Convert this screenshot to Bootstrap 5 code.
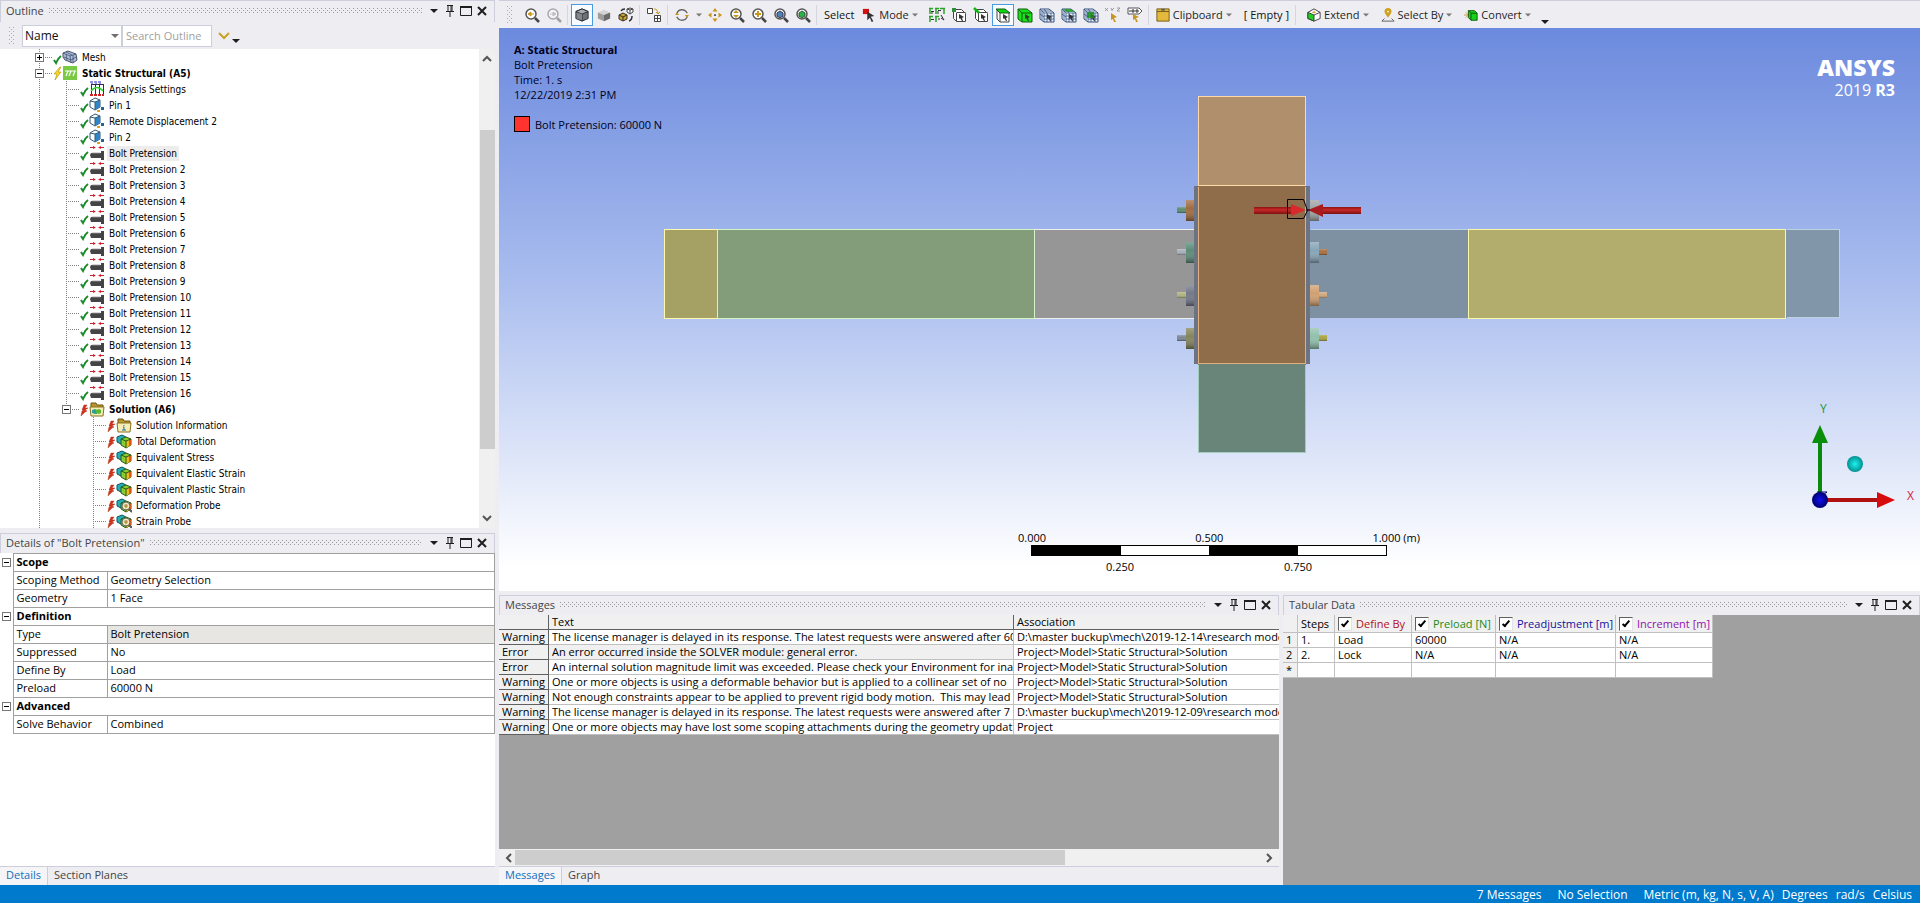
<!DOCTYPE html>
<html lang="en">
<head>
<meta charset="utf-8">
<meta name="viewport" content="width=device-width, initial-scale=1">
<title>A: Static Structural - Mechanical</title>
<link href="https://cdn.jsdelivr.net/npm/bootstrap@5.3.0/dist/css/bootstrap.min.css" rel="stylesheet">
<style>
  :root { --chrome: #eeeef2; --edge: #cccedb; --grid: #a0a0a0; }
  body { font-family: "Open Sans", "Noto Sans", sans-serif; font-size: 11px; line-height: 14px; color: #111; background: var(--chrome); overflow: hidden; }
  button, select, input { font: inherit; color: inherit; }
  svg { display: block; flex: none; }
  .workspace { display: grid; grid-template-columns: 495fr 1421fr; column-gap: 4px; min-height: 0; }
  .side { display: grid; grid-template-rows: 528fr 352fr; row-gap: 5px; min-height: 0; min-width: 0; }
  .stage { display: grid; grid-template-rows: 28px 563fr 294fr; min-height: 0; min-width: 0; }
  .lower { display: grid; grid-template-columns: 780fr 637fr; column-gap: 4px; padding-top: 4px; min-height: 0; }
  .pane { display: flex; flex-direction: column; min-width: 0; min-height: 0; border-top: 1px solid var(--edge); }
  .pane-head { display: flex; align-items: center; height: 19px; flex: none; padding: 0 4px 2px 5px; color: #444; border-left: 1px solid var(--edge); border-right: 1px solid var(--edge); }
  .pane-head.tall { height: 21px; }
  .dots { flex: 1; height: 5px; margin: 0 4px 0 5px; background: conic-gradient(at 1px 1px, transparent 75%, #999 0) 0 0 / 4px 4px, conic-gradient(at 1px 1px, transparent 75%, #999 0) 2px 2px / 4px 4px; }
  .flat { border: 0; background: none; padding: 0; display: flex; align-items: center; justify-content: center; color: #1e1e1e; }
  .pane-head .flat { width: 16px; height: 16px; }
  .grip { width: 6px; height: 18px; flex: none; background: conic-gradient(at 1px 1px, transparent 75%, #aaa 0) 0 0 / 4px 4px, conic-gradient(at 1px 1px, transparent 75%, #aaa 0) 2px 2px / 4px 4px; }

  .find-bar { height: 27px; flex: none; padding-left: 9px; font-size: 12px; }
  .find-bar select { width: 100px; height: 22px; border: 1px solid var(--edge); background: #fff; padding: 0 2px; appearance: none; border-radius: 0; }
  .find-bar input { width: 90px; height: 22px; border: 1px solid var(--edge); background: #fff; padding: 0 3px; font-size: 11px; }
  .find-bar input::placeholder { color: #a0a0a0; opacity: 1; }
  .pick { position: relative; margin-left: 7px; }
  .pick svg { position: absolute; right: 3px; top: 7px; color: #717171; pointer-events: none; }

  .tree { font-family: "DejaVu Sans Condensed", "Open Sans", sans-serif; font-size: 10px; background: #fff; flex: 1; min-width: 0; padding-left: 26px; overflow: hidden; color: #000; }
  .tree ul { list-style: none; margin: 0; padding: 0; }
  .node { display: flex; height: 16px; align-items: center; white-space: nowrap; }
  .cell { width: 27px; height: 16px; flex: none; display: flex; align-items: center; --v: repeating-linear-gradient(#808080 0 1px, transparent 1px 2px); --h: repeating-linear-gradient(90deg, #808080 0 1px, transparent 1px 2px); background-repeat: no-repeat; }
  .cell.line { background-image: var(--v); background-size: 1px 16px; background-position: 13px 0; }
  .cell.tee { background-image: var(--v), var(--h); background-size: 1px 16px, 14px 1px; background-position: 13px 0, 13px 8px; }
  .cell.end { background-image: var(--v), var(--h); background-size: 1px 8px, 14px 1px; background-position: 13px 0, 13px 8px; }
  .toggle { width: 9px; height: 9px; padding: 0; margin-left: 9px; border: 1px solid #777; background: #fff; position: relative; display: block; flex: none; }
  .toggle::before, .toggle.plus::after { content: ""; position: absolute; left: 1px; top: 3px; width: 5px; height: 1px; background: #000; }
  .toggle.plus::after { transform: rotate(90deg); }
  .node .cap { padding: 0 2px; margin-left: 2px; line-height: 15px; color: #000; text-decoration: none; }
  .node .cap.on { background: #ededed; }

  .vbar { width: 16px; flex: none; background: #f0f0f0; display: flex; flex-direction: column; align-items: center; }
  .vbar .thumb { width: 15px; flex: 319; background: #cdcdcd; }
  .vbar .run-a { flex: 61; } .vbar .run-b { flex: 59; }
  .hbar { height: 17px; flex: none; background: #f0f0f0; display: flex; align-items: center; }
  .hbar .thumb { flex: 549; height: 15px; background: #cdcdcd; }
  .hbar .run { flex: 197; }

  .sheet { background: #fff; flex: 1; min-height: 0; overflow: hidden; }
  .props { width: 100%; table-layout: fixed; border-collapse: collapse; color: #000; }
  .props td, .props th { height: 18px; padding: 0 0 2px 3px; border: 1px solid #a0a0a0; font-weight: 400; line-height: 14px; white-space: nowrap; overflow: hidden; text-align: left; }
  .props .gut { border: 0; border-right: 1px solid #a0a0a0; padding: 0; }
  .props .gut .toggle { margin-left: 2px; }
  .props th.cat { font-weight: 700; }
  .props .locked { background: #e7e6e3; }

  .tabs { height: 19px; flex: none; display: flex; border-top: 1px solid var(--edge); }
  .tabs a { padding: 0 6px; color: #444; text-decoration: none; border-right: 1px solid transparent; line-height: 15px; }
  .tabs a.on { color: #0e70c0; background: #f5f5f7; border-right-color: var(--edge); }

  .ribbon { border-top: 1px solid var(--edge); padding-left: 8px; }
  .ribbon .flat { height: 22px; }
  .ico { width: 22px; flex: none; border: 1px solid transparent !important; }
  .ico.on { border-color: #4b9be0 !important; background: #f8fbff !important; }
  .rule { width: 1px; height: 20px; margin: 0 3px 0 2px; background: #d5d6e0; flex: none; }
  .menu-btn { gap: 3px; white-space: nowrap; }
  .menu-btn .car, .car { color: #777; }
  .rot-car { margin: 0 2px 0 3px; }
  .more { padding-left: 6px !important; }

  .view { position: relative; background: linear-gradient(#6c8ade, #a9bdee 45%, #fff 96%); overflow: hidden; min-height: 0; }
  .view > .model { width: 100%; height: 100%; }
  .caption { position: absolute; left: 15px; top: 14px; line-height: 15px; color: #000020; }
  .legend-row { display: flex; align-items: center; gap: 5px; margin-top: 14px; }
  .swatch { width: 16px; height: 16px; background: #ff342e; border: 1px solid #000; }
  .brand { position: absolute; right: 25px; top: 23px; color: #fff; text-align: right; }
  .brand .name { font-weight: 800; font-size: 23px; line-height: 32px; }
  .brand .rel { font-size: 16px; line-height: 18px; margin-top: -2px; }
  .triad { position: absolute; right: 0; bottom: 72px; }
  .ruler { position: absolute; right: 500px; bottom: 17px; width: 402px; color: #000; }
  .ruler .bars { height: 11px; border: 1px solid #000; margin: 0 33px 0 13px; display: grid; grid-template-columns: repeat(4, 1fr); }
  .ruler .bars i:nth-child(odd) { background: #000; }
  .ruler .bars i:nth-child(even) { background: #fff; }
  .ruler .under { margin: 4px 33px 0 13px; }

  .msgs { width: 100%; table-layout: fixed; border-collapse: separate; border-spacing: 0; background: #fff; color: #000; }
  .msgs td, .msgs th { height: 15px; padding: 0 0 0 3px; font-weight: 400; border-right: 1px solid #c0c0c0; border-bottom: 1px solid #c0c0c0; overflow: hidden; white-space: pre; line-height: 14px; text-align: left; }
  .msgs th, .steps th { background: #f0f0f0; border-right-color: #606060; border-bottom-color: #606060; }
  .msgs div { height: 14px; overflow: hidden; }
  .msgs tr > :last-child { border-right: 0; }
  .msgs .alt td { background: #f0f0f0; }
  .steps { border-collapse: separate; border-spacing: 0; background: #fff; table-layout: fixed; width: 430px; color: #000; }
  .steps td, .steps th { height: 15px; padding: 0 0 0 3px; font-weight: 400; border-right: 1px solid #c0c0c0; border-bottom: 1px solid #c0c0c0; line-height: 14px; white-space: nowrap; overflow: hidden; text-align: left; }
  .steps thead th { height: 18px; }
  .steps label { display: flex; align-items: center; gap: 4px; }
  .steps input { appearance: none; width: 14px; height: 14px; margin: 0; flex: none; border: 1px solid; border-color: #606060 #e3e3e3 #e3e3e3 #606060; background: #fff; position: relative; }
  .steps input:checked::before { content: ""; position: absolute; left: 4px; top: 1px; width: 4px; height: 8px; border: solid #000; border-width: 0 2px 2px 0; transform: rotate(40deg); }
  .void { background: var(--grid); flex: 1; min-height: 0; overflow: hidden; }

  .status { height: 18px; flex: none; background: #007acc; color: #fff; white-space: nowrap; padding: 2px 8px 0 0; font-size: 12px; line-height: 16px; }
</style>
</head>
<body class="vh-100 d-flex flex-column">

<svg width="0" height="0" class="position-absolute" aria-hidden="true">
  <defs>
    <linearGradient id="g-cyl" x2="0" y2="1"><stop stop-color="#fff" stop-opacity=".25"/><stop offset=".4" stop-color="#fff" stop-opacity="0"/><stop offset="1" stop-color="#000" stop-opacity=".4"/></linearGradient>
    <linearGradient id="g-red" x2="0" y2="1"><stop stop-color="#8c1414"/><stop offset=".4" stop-color="#c82828"/><stop offset="1" stop-color="#7c1010"/></linearGradient>
    <radialGradient id="g-blue"><stop stop-color="#1010f0"/><stop offset="1" stop-color="#000070"/></radialGradient>
    <radialGradient id="g-cyan"><stop stop-color="#20f0f0"/><stop offset="1" stop-color="#009090"/></radialGradient>
  </defs>
  <symbol id="caret" viewBox="0 0 8 8"><path d="M0 2h8L4 6z" fill="currentColor"/></symbol>
  <symbol id="pin" viewBox="0 0 12 12"><path d="M3 .5h6M4 .5v6M8 0v6.500M7 1v5M2 6.500h8M6 7v5" stroke="currentColor" fill="none"/></symbol>
  <symbol id="max" viewBox="0 0 12 12"><path d="M.5 1.500h11v9H.5z" stroke="currentColor" fill="none"/><path d="M0 2h12" stroke="currentColor" stroke-width="2"/></symbol>
  <symbol id="close" viewBox="0 0 12 12"><path d="M2 2l8 8M10 2l-8 8" stroke="currentColor" stroke-width="2"/></symbol>
  <symbol id="chev" viewBox="0 0 12 12"><path d="M2 8l4-4 4 4" stroke="currentColor" stroke-width="2" fill="none"/></symbol>

  <symbol id="check" viewBox="0 0 9 16"><path d="M1 11l2 3q2-5 5-7" fill="none" stroke="#1b8a2b" stroke-width="2"/></symbol>
  <symbol id="bolt-y" viewBox="0 0 9 16"><path d="M7 2L1 9h3l-2 6 6-8H5l3-5z" fill="#ffd91f" stroke="#b09000" stroke-width=".6"/></symbol>
  <symbol id="bolt-r" viewBox="0 0 9 16"><path d="M7 4L4 4 2 9h2l-2 1-1 5 4-4 2-1-2-1 3-2H5z" fill="#d3321c" stroke="#a32010" stroke-width=".4"/></symbol>
  <symbol id="t-mesh" viewBox="0 0 16 16"><path d="M1 4l5-2 8 3 1 6-4 3-8-3-2-3z" fill="#aebfdd" stroke="#44516d"/><path d="M1 4l7 3 6-2M8 7l1 7M4 5l1 6M11 6v7M2 8l7 3 5-3M4 3l6 3" stroke="#44516d" fill="none" stroke-width=".8"/></symbol>
  <symbol id="t-static" viewBox="0 0 16 16"><path d="M1 1h14v14H1z" fill="#7ac943"/><path d="M3 6h11M4 11l2-5M7 11l2-5M11 11l2-5" stroke="#fff" stroke-width="1.200" fill="none"/></symbol>
  <symbol id="t-set" viewBox="0 0 16 16"><path d="M2.500 3v11M6.500 3v11M10.500 3v11M14.500 3v11M2 3.500h12" stroke="#333"/><path d="M2 10q6-7 12 0" stroke="#29d629" fill="none" stroke-width="1.500"/><path d="M1 1h3M5 1h3M9 1h3M3 2v2M7 2v2M11 2v2" stroke="#22c"/><path d="M1 14h3M5 14h3M9 14h3M13 14h2" stroke="#c22" stroke-width="2"/></symbol>
  <symbol id="t-pin" viewBox="0 0 16 16"><path d="M1 4l5-3 5 2v7l-5 3-5-3z" fill="#fff" stroke="#335a78"/><path d="M6 5l5-2v7l-5 3z" fill="#2f86c6"/><path d="M1 4l5 1v8M6 5l5-2" stroke="#335a78" fill="none"/><path d="M12 10h3v3h-3z" fill="#2b5f97"/><path d="M8 13h3v2H8z" fill="#d9a421"/></symbol>
  <symbol id="t-bolt" viewBox="0 0 16 16"><path d="M1 2.500h5M10 2.500h5" stroke="#d02030"/><path d="M4 1l3 1.500L4 4zM12 1L9 2.500 12 4z" fill="#d02030"/><path d="M1 10l1-2h10V6h3v9h-3v-2H2z" fill="#444"/><path d="M4 7v2M6 7v2M8 7v2M10 7v2" stroke="#999" stroke-width=".8"/></symbol>
  <symbol id="t-fold" viewBox="0 0 16 16"><path d="M2 2h5l1 2h6v4H2z" fill="#b8962c" stroke="#6d5510"/><path d="M1 6h14l-1 9H2z" fill="#f6edb2" stroke="#8a7020"/></symbol>
  <symbol id="t-sol" viewBox="0 0 16 16"><use href="#t-fold"/><path d="M3 9l3-1 2 1v4l-2 0-3-1z" fill="#2aa198"/><path d="M7 9l3-1 2 1v3l-2 1-3-1z" fill="#5cb82e"/></symbol>
  <symbol id="t-info" viewBox="0 0 16 16"><use href="#t-fold"/><path d="M8 8v1M7 10h1v3M6 13h4" stroke="#1d6db5" fill="none"/></symbol>
  <symbol id="t-res" viewBox="0 0 16 16"><path d="M1 4l5-2 4 2v6l-5 1-4-2z" fill="#1fb0b8" stroke="#14545e"/><path d="M5 6l5-2 5 2v6l-5 3-5-3z" fill="#86cf2e" stroke="#2a5a1a"/><path d="M10 8l5-2v6l-5 3z" fill="#f0b81c"/><path d="M13 7l2-1v6l-2 1z" fill="#e2561a"/><path d="M5 6l5 2v7M10 8l5-2" stroke="#2a5a1a" fill="none"/></symbol>
  <symbol id="t-probe" viewBox="0 0 16 16"><use href="#t-res"/><circle cx="10" cy="9" r="4" fill="#f5efd2" fill-opacity=".85" stroke="#666"/><path d="M13 12l3 3" stroke="#555" stroke-width="2"/><path d="M8 9h4M10 7v4" stroke="#b07a20"/></symbol>

  <symbol id="lens" viewBox="0 0 16 16"><circle cx="7" cy="7" r="5" fill="#fff" stroke="#555" stroke-width="1.500"/><path d="M11 11l4 4" stroke="#444" stroke-width="2.500"/></symbol>
  <symbol id="i-prev" viewBox="0 0 16 16"><use href="#lens"/><path d="M4 7l3-2v4zM6 7h4" fill="#c8961e" stroke="#c8961e"/></symbol>
  <symbol id="i-next" viewBox="0 0 16 16"><g opacity=".45"><use href="#lens"/><path d="M10 7L7 5v4zM4 7h4" fill="#888" stroke="#888"/></g></symbol>
  <symbol id="i-solid" viewBox="0 0 16 16"><path d="M1 4l7-3 7 3v8l-7 3-7-3z" fill="#6d7278" stroke="#222"/><path d="M1 4l7-3 7 3-7 3z" fill="#a8adb3" stroke="#222"/><path d="M8 7v8" stroke="#222"/><path d="M2 5l6 2v7l-6-2z" fill="#82878d"/></symbol>
  <symbol id="i-shade" viewBox="0 0 16 16"><path d="M1 5l7-3 7 3-7 3z" fill="#d4d4d4"/><path d="M1 5l7 3v7l-7-3z" fill="#9d9d9d"/><path d="M15 5L8 8v7l7-3z" fill="#6b6b6b"/></symbol>
  <symbol id="i-rand" viewBox="0 0 16 16"><path d="M9 2l3-1 3 1v3l-3 2-3-2z" fill="#fff" stroke="#444"/><path d="M9 2l3 1 3-1M12 3v4" fill="none" stroke="#444"/><path d="M1 8l4-2 4 2v4l-4 2-4-2z" fill="#c9a227" stroke="#333"/><path d="M1 8l4 2 4-2M5 10v4" stroke="#333" fill="none"/><path d="M3 4q1-2 4-2M14 9q0 4-3 5" fill="none" stroke="#333" stroke-width="1.500"/></symbol>
  <symbol id="i-wire" viewBox="0 0 16 16"><path d="M1.500 1.500h5v5h-5zM8.500 8.500h6v6h-6zM11.500 9v5M9 11.500h5" fill="#fff" stroke="#444"/><path d="M8 2q4 0 4 5M10 5l2 2 2-2" fill="none" stroke="#c8961e"/></symbol>
  <symbol id="i-rot" viewBox="0 0 16 16"><path d="M2 7q1-5 6-5 4 0 6 4M14 9q-1 5-6 5-4 0-6-4" fill="none" stroke="#666" stroke-width="1.500"/><path d="M0 8l2-3 3 3zM16 8l-2 3-3-3z" fill="#c8961e"/></symbol>
  <symbol id="i-pan" viewBox="0 0 16 16"><path d="M8 0l3 4H5zM8 16l3-4H5zM0 8l4-3v6zM16 8l-4-3v6z" fill="#c8961e"/><path d="M7 7h2v2H7z" fill="#444"/></symbol>
  <symbol id="i-zoom" viewBox="0 0 16 16"><use href="#lens"/><path d="M4 6l3-3 3 3zM4 8l3 3 3-3z" fill="#c8961e"/></symbol>
  <symbol id="i-box" viewBox="0 0 16 16"><use href="#lens"/><path d="M7 4v6M4 7h6" stroke="#c8961e" stroke-width="2"/></symbol>
  <symbol id="i-fit" viewBox="0 0 16 16"><use href="#lens"/><path d="M4 6l3-2 3 2v3l-3 2-3-2z" fill="#4d84b8" stroke="#335"/></symbol>
  <symbol id="i-sel" viewBox="0 0 16 16"><use href="#lens"/><path d="M4 6l3-2 3 2v3l-3 2-3-2z" fill="#28b446" stroke="#353"/></symbol>
  <symbol id="i-mode" viewBox="0 0 16 16"><path d="M1 1h7v6H1z" fill="#d01010"/><path d="M6 4l8 5-4 1 3 5-2 1-2-5-3 3z" fill="#333"/></symbol>
  <symbol id="cur" viewBox="0 0 16 16"><path d="M8 7l5 3-2 1 1 3h-1l-2-3-1 1z" fill="#333"/></symbol>
  <symbol id="i-grp" viewBox="0 0 16 16"><path d="M0 1.500h4M1 1v6M6 1.500h4M7 1v6M11 1.500h5M15 1v6M0 9.500h4M1 9v6M6 9.500h4M7 9v6" stroke="#28a428" stroke-width="1.500"/><path d="M2 4.500h3M3 4v3M9 3.500h3M9 4v3M2 12.500h3M9 12h2M12 8l3 5-3-2" stroke="#333" fill="none"/></symbol>
  <symbol id="i-vert" viewBox="0 0 16 16"><path d="M2.500 2.500h8l4 4v8h-9l-3-3zM5.500 6v8M5.500 5.500h9" fill="#fff" stroke="#444"/><path d="M1 1h4v4H1z" fill="#2f8f3c"/><use href="#cur"/></symbol>
  <symbol id="i-edge" viewBox="0 0 16 16"><path d="M2.500 2.500h8l4 4v8h-9l-3-3zM5.500 6v8M5.500 5.500h9" fill="#fff" stroke="#444"/><path d="M1 1l5 5" stroke="#12b512" stroke-width="2.500"/><use href="#cur"/></symbol>
  <symbol id="i-face" viewBox="0 0 16 16"><path d="M2 3h8l4 3v9H5l-3-3zM5 6v9" fill="#fff" stroke="#444"/><path d="M1 2h9l5 4H5z" fill="#12d512" stroke="#175c17"/><use href="#cur"/></symbol>
  <symbol id="i-body" viewBox="0 0 16 16"><path d="M1 2h9l5 4v9H5l-4-3z" fill="#19e119" stroke="#0e5c0e"/><path d="M1 2l4 4h10M5 6v9" fill="none" stroke="#0e5c0e"/><use href="#cur"/></symbol>
  <symbol id="i-grid" viewBox="0 0 16 16"><path d="M1 2h9l5 4v9H5l-4-3z" fill="#eaf2ff" stroke="#35507c"/><path d="M1 2l4 4h10M5 6v9M8 6v9M12 6v9M5 9h10M5 12h10M3 4h9M1 7l4 3M5 2l3 4M3 4v9" fill="none" stroke="#35507c" stroke-width=".8"/><use href="#cur"/></symbol>
  <symbol id="i-gridf" viewBox="0 0 16 16"><use href="#i-grid"/><path d="M2 2h8l4 3H5z" fill="#1ba01b" fill-opacity=".8"/></symbol>
  <symbol id="i-gridb" viewBox="0 0 16 16"><use href="#i-grid"/><path d="M4 5h7v6H4z" fill="#1b901b" fill-opacity=".85"/></symbol>
  <symbol id="i-xyz" viewBox="0 0 16 16"><path d="M0 1l3 3M3 1L0 4M6 1l1 2 2-2M7 3v1M12 1h3l-3 3h3" stroke="#888" stroke-width=".8" fill="none"/><path d="M6 6l6 4-3 1 2 4-2 0-1-3-2 1z" fill="#c8961e"/></symbol>
  <symbol id="i-tag" viewBox="0 0 16 16"><path d="M1 1h11l3 3-3 3H1z" fill="#fff" stroke="#555"/><path d="M3 3v2M5 3h2v2H5zM9 3h2v2H9z" stroke="#333" fill="none"/><path d="M6 7l6 3-3 1 2 4-2 0-1-3-2 1z" fill="#c8961e"/></symbol>
  <symbol id="i-clip" viewBox="0 0 16 16"><path d="M1 1h14v14H1z" fill="#e3b83c" stroke="#6a5314"/><path d="M1 4h14" stroke="#6a5314"/><path d="M6 1h4v2H6z" fill="#555"/></symbol>
  <symbol id="i-ext" viewBox="0 0 16 16"><path d="M1 5l7-4 7 4v7l-7 3-7-3z" fill="#fff" stroke="#333"/><path d="M1 5l7 3v7l-7-3z" fill="#22d022" stroke="#333"/><path d="M8 8l7-3" stroke="#333"/><path d="M8 3v3M6 5h4" stroke="#c8961e"/></symbol>
  <symbol id="i-loc" viewBox="0 0 16 16"><path d="M8 11Q4 6 4 4a4 4 0 018 0q0 2-4 7z" fill="#d0a021"/><circle cx="8" cy="4" r="1" fill="#fff"/><path d="M4 12l-3 3h14l-3-3" fill="none" stroke="#555"/></symbol>
  <symbol id="i-conv" viewBox="0 0 16 16"><path d="M0 8h4M2 5l3 3-3 3" stroke="#c8961e" fill="none"/><path d="M5 3h7l3 3v8H8l-3-3z" fill="#17d217" stroke="#0e4c0e"/><path d="M5 3l3 3h7M8 6v8" fill="none" stroke="#0e4c0e"/></symbol>
</svg>

<main class="workspace flex-grow-1">
  <div class="side">
    <section class="pane" aria-label="Outline">
      <header class="pane-head tall"><span>Outline</span><span class="dots"></span><button class="flat" aria-label="Menu"><svg width="8" height="8"><use href="#caret"/></svg></button><button class="flat" aria-label="Pin"><svg width="12" height="12"><use href="#pin"/></svg></button><button class="flat" aria-label="Maximize"><svg width="12" height="12"><use href="#max"/></svg></button><button class="flat" aria-label="Close"><svg width="12" height="12"><use href="#close"/></svg></button></header>
      <div class="find-bar d-flex align-items-center">
        <span class="grip"></span>
        <span class="pick"><select aria-label="Filter by"><option>Name</option></select><svg width="8" height="8"><use href="#caret"/></svg></span>
        <input type="text" placeholder="Search Outline" aria-label="Search Outline">
        <button class="flat ms-1" aria-label="Expand"><svg width="16" height="12" viewBox="0 0 16 12"><path d="M3 3l5 5 5-5" fill="none" stroke="#c9a227" stroke-width="2"/></svg></button>
        <button class="flat align-self-end mb-1" aria-label="More"><svg width="8" height="8"><use href="#caret"/></svg></button>
      </div>
      <div class="d-flex flex-grow-1 overflow-hidden">
        <div class="tree"><ul id="tree"></ul></div>
        <div class="vbar"><svg class="my-1" width="12" height="12" color="#555"><use href="#chev"/></svg><span class="run-a"></span><span class="thumb"></span><span class="run-b"></span><svg class="my-1" width="12" height="12" color="#555"><use href="#chev" transform="rotate(180 6 6)"/></svg></div>
      </div>
    </section>

    <section class="pane" aria-label="Details">
      <header class="pane-head"><span>Details of "Bolt Pretension"</span><span class="dots"></span><button class="flat" aria-label="Menu"><svg width="8" height="8"><use href="#caret"/></svg></button><button class="flat" aria-label="Pin"><svg width="12" height="12"><use href="#pin"/></svg></button><button class="flat" aria-label="Maximize"><svg width="12" height="12"><use href="#max"/></svg></button><button class="flat" aria-label="Close"><svg width="12" height="12"><use href="#close"/></svg></button></header>
      <div class="sheet">
        <table class="props">
          <colgroup><col style="width:13px"><col style="width:94px"><col></colgroup>
          <tr><td class="gut"><button class="toggle" aria-label="Collapse"></button></td><th class="cat" colspan="2">Scope</th></tr>
          <tr><td class="gut"></td><th>Scoping Method</th><td>Geometry Selection</td></tr>
          <tr><td class="gut"></td><th>Geometry</th><td>1 Face</td></tr>
          <tr><td class="gut"><button class="toggle" aria-label="Collapse"></button></td><th class="cat" colspan="2">Definition</th></tr>
          <tr><td class="gut"></td><th>Type</th><td class="locked">Bolt Pretension</td></tr>
          <tr><td class="gut"></td><th>Suppressed</th><td>No</td></tr>
          <tr><td class="gut"></td><th>Define By</th><td>Load</td></tr>
          <tr><td class="gut"></td><th>Preload</th><td>60000 N</td></tr>
          <tr><td class="gut"><button class="toggle" aria-label="Collapse"></button></td><th class="cat" colspan="2">Advanced</th></tr>
          <tr><td class="gut"></td><th>Solve Behavior</th><td>Combined</td></tr>
        </table>
      </div>
      <nav class="tabs"><a class="on" href="#">Details</a><a href="#">Section Planes</a></nav>
    </section>
  </div>

  <div class="stage">
    <div class="ribbon d-flex align-items-center" role="toolbar">
      <span class="grip me-1"></span>
      <button class="flat ico ms-1" aria-label="Previous view"><svg width="16" height="16"><use href="#i-prev"/></svg></button>
      <button class="flat ico" aria-label="Next view"><svg width="16" height="16"><use href="#i-next"/></svg></button>
      <span class="rule"></span>
      <button class="flat ico on" aria-label="Shaded with edges"><svg width="14" height="14"><use href="#i-solid"/></svg></button>
      <button class="flat ico" aria-label="Shaded"><svg width="14" height="14"><use href="#i-shade"/></svg></button>
      <button class="flat ico" aria-label="Random colors"><svg width="16" height="16"><use href="#i-rand"/></svg></button>
      <span class="rule"></span>
      <button class="flat ico" aria-label="Preferences"><svg width="16" height="16"><use href="#i-wire"/></svg></button>
      <span class="rule"></span>
      <button class="flat ico" aria-label="Rotate"><svg width="14" height="14"><use href="#i-rot"/></svg></button>
      <button class="flat car rot-car" aria-label="Rotate options"><svg width="6" height="6"><use href="#caret"/></svg></button>
      <button class="flat ico" aria-label="Pan"><svg width="14" height="14"><use href="#i-pan"/></svg></button>
      <button class="flat ico" aria-label="Zoom"><svg width="16" height="16"><use href="#i-zoom"/></svg></button>
      <button class="flat ico" aria-label="Box zoom"><svg width="16" height="16"><use href="#i-box"/></svg></button>
      <button class="flat ico" aria-label="Zoom to fit"><svg width="16" height="16"><use href="#i-fit"/></svg></button>
      <button class="flat ico" aria-label="Zoom to selection"><svg width="16" height="16"><use href="#i-sel"/></svg></button>
      <span class="rule"></span>
      <span class="mx-1">Select</span>
      <button class="flat menu-btn mx-1"><svg width="14" height="14"><use href="#i-mode"/></svg>Mode<svg class="car" width="6" height="6"><use href="#caret"/></svg></button>
      <button class="flat ico ms-1" aria-label="Filter"><svg width="16" height="16"><use href="#i-grp"/></svg></button>
      <button class="flat ico" aria-label="Vertex"><svg width="16" height="16"><use href="#i-vert"/></svg></button>
      <button class="flat ico" aria-label="Edge"><svg width="16" height="16"><use href="#i-edge"/></svg></button>
      <button class="flat ico on" aria-label="Face"><svg width="16" height="16"><use href="#i-face"/></svg></button>
      <button class="flat ico" aria-label="Body"><svg width="16" height="16"><use href="#i-body"/></svg></button>
      <button class="flat ico" aria-label="Node"><svg width="16" height="16"><use href="#i-grid"/></svg></button>
      <button class="flat ico" aria-label="Element face"><svg width="16" height="16"><use href="#i-gridf"/></svg></button>
      <button class="flat ico" aria-label="Element"><svg width="16" height="16"><use href="#i-gridb"/></svg></button>
      <button class="flat ico" aria-label="Coordinates"><svg width="16" height="16"><use href="#i-xyz"/></svg></button>
      <button class="flat ico" aria-label="Label"><svg width="16" height="16"><use href="#i-tag"/></svg></button>
      <span class="rule"></span>
      <button class="flat menu-btn mx-1"><svg width="14" height="14"><use href="#i-clip"/></svg>Clipboard<svg class="car" width="6" height="6"><use href="#caret"/></svg></button>
      <span class="text-nowrap ms-2 me-1">[ Empty ]</span>
      <span class="rule"></span>
      <button class="flat menu-btn ms-2 me-1"><svg width="14" height="14"><use href="#i-ext"/></svg>Extend<svg class="car" width="6" height="6"><use href="#caret"/></svg></button>
      <button class="flat menu-btn mx-2"><svg width="14" height="14"><use href="#i-loc"/></svg>Select By<svg class="car" width="6" height="6"><use href="#caret"/></svg></button>
      <button class="flat menu-btn mx-1"><svg width="14" height="14"><use href="#i-conv"/></svg>Convert<svg class="car" width="6" height="6"><use href="#caret"/></svg></button>
      <button class="flat align-items-end more" aria-label="More"><svg width="8" height="8"><use href="#caret"/></svg></button>
    </div>

    <div class="view">
      <svg class="model" viewBox="499 28 1421 563" role="img" aria-label="Bolted joint model">
        <g shape-rendering="crispEdges">
          <path d="M665 230h52v88h-52z" fill="#a5a064"/>
          <path d="M717 230h317v88H717z" fill="#839d7a"/>
          <path d="M1034 230h161v88h-161z" fill="#969696"/>
          <path d="M1309 230h159v88h-159z" fill="#7e91a3"/>
          <path d="M1468 230h318v88h-318z" fill="#b3ad6d"/>
          <path d="M1786 230h53v88h-53z" fill="#8296aa"/>
          <g fill="none" transform="translate(.5 .5)">
            <path d="M664 229h53v89h-53z" stroke="#fdf8b0"/>
            <path d="M717 229h317v89H717z" stroke="#d4f4c4"/>
            <path d="M1194 229h-160M1194 318h-160" stroke="#eee"/>
            <path d="M1310 229h158M1786 229h53v88h-53" stroke="#bdd0e4"/>
            <path d="M1468 229h317v89h-317z" stroke="#fbf7a8"/>
          </g>
          <path d="M1198 96h108v90h-108z" fill="#b08f6c"/>
          <path d="M1198 364h108v88h-108z" fill="#698479"/>
          <path d="M1194 186h116v178h-116z" fill="#6c7484"/>
          <path d="M1198 186h108v178h-108z" fill="#8f6c4a"/>
          <g fill="none" transform="translate(.5 .5)">
            <path d="M1198 364v88h107v-88" stroke="#a4ccba"/>
            <path d="M1198 96h107v89h-107z" stroke="#ffd9a8"/>
            <path d="M1198 186v177h107V186" stroke="#e0b080"/>
          </g>
          <g id="bolts"></g>
        </g>
        <path d="M1254 207h37v7h-37zM1322 207h39v7h-39z" fill="url(#g-red)"/>
        <path d="M1291 204l15 6-15 6z" fill="#d82a2a"/><path d="M1323 204l-15 6 15 7z" fill="#a81c20"/>
        <path d="M1287.500 199.500h16l4 11-4 8h-16zM1306 210h4" fill="none" stroke="#000"/>
      </svg>
      <div class="caption"><b>A: Static Structural</b><br>Bolt Pretension<br>Time: 1. s<br>12/22/2019 2:31 PM
        <div class="legend-row"><span class="swatch"></span>Bolt Pretension: 60000 N</div>
      </div>
      <div class="brand"><div class="name">ANSYS</div><div class="rel">2019 <b>R3</b></div></div>
      <div class="ruler">
        <div class="d-flex justify-content-between"><span>0.000</span><span>0.500</span><span>1.000 (m)</span></div>
        <div class="bars"><i></i><i></i><i></i><i></i></div>
        <div class="under d-flex justify-content-around"><span>0.250</span><span>0.750</span></div>
      </div>
      <svg class="triad" width="120" height="120" viewBox="1800 399 120 120" font-size="12">
        <path d="M1818 440h4v56h-4z" fill="#0a8a0a"/><path d="M1820 425l8 18h-16z" fill="#0a8f0a"/>
        <path d="M1822 498h56v4h-56z" fill="#b01010"/><path d="M1877 492l18 8-18 8z" fill="#d80c0c"/>
        <circle cx="1820" cy="500" r="8" fill="url(#g-blue)"/><path d="M1817 492h10l-4 3" fill="none" stroke="#000080"/>
        <circle cx="1855" cy="464" r="8" fill="url(#g-cyan)"/>
        <text x="1820" y="413" fill="#1a9a3a">Y</text><text x="1907" y="500" fill="#d82040">X</text>
      </svg>
    </div>

    <div class="lower">
      <section class="pane" aria-label="Messages">
        <header class="pane-head"><span>Messages</span><span class="dots"></span><button class="flat" aria-label="Menu"><svg width="8" height="8"><use href="#caret"/></svg></button><button class="flat" aria-label="Pin"><svg width="12" height="12"><use href="#pin"/></svg></button><button class="flat" aria-label="Maximize"><svg width="12" height="12"><use href="#max"/></svg></button><button class="flat" aria-label="Close"><svg width="12" height="12"><use href="#close"/></svg></button></header>
        <div class="void">
          <table class="msgs">
            <colgroup><col style="width:50px"><col><col style="width:265px"></colgroup>
            <thead><tr><th></th><th>Text</th><th>Association</th></tr></thead>
            <tbody id="msgs"></tbody>
          </table>
        </div>
        <div class="hbar"><svg class="ms-1" width="12" height="12" color="#555"><use href="#chev" transform="rotate(-90 6 6)"/></svg><span class="thumb"></span><span class="run"></span><svg class="me-1" width="12" height="12" color="#555"><use href="#chev" transform="rotate(90 6 6)"/></svg></div>
        <nav class="tabs"><a class="on" href="#">Messages</a><a href="#">Graph</a></nav>
      </section>

      <section class="pane" aria-label="Tabular Data">
        <header class="pane-head"><span>Tabular Data</span><span class="dots"></span><button class="flat" aria-label="Menu"><svg width="8" height="8"><use href="#caret"/></svg></button><button class="flat" aria-label="Pin"><svg width="12" height="12"><use href="#pin"/></svg></button><button class="flat" aria-label="Maximize"><svg width="12" height="12"><use href="#max"/></svg></button><button class="flat" aria-label="Close"><svg width="12" height="12"><use href="#close"/></svg></button></header>
        <div class="void">
          <table class="steps">
            <colgroup><col style="width:15px"><col style="width:37px"><col style="width:77px"><col style="width:84px"><col style="width:120px"><col style="width:97px"></colgroup>
            <thead><tr><th></th><th>Steps</th>
              <th><label style="color:#b01020"><input type="checkbox" checked>Define By</label></th>
              <th><label style="color:#208a20"><input type="checkbox" checked>Preload [N]</label></th>
              <th><label style="color:#1010a0"><input type="checkbox" checked>Preadjustment [m]</label></th>
              <th><label style="color:#9010b0"><input type="checkbox" checked>Increment [m]</label></th></tr></thead>
            <tbody>
              <tr><th>1</th><td>1.</td><td>Load</td><td>60000</td><td>N/A</td><td>N/A</td></tr>
              <tr><th>2</th><td>2.</td><td>Lock</td><td>N/A</td><td>N/A</td><td>N/A</td></tr>
              <tr><th>*</th><td></td><td></td><td></td><td></td><td></td></tr>
            </tbody>
          </table>
        </div>
      </section>
    </div>
  </div>
</main>

<footer class="status d-flex justify-content-end"><span>7 Messages</span><span class="ms-3">No Selection</span><span class="ms-3">Metric (m, kg, N, s, V, A)</span><span class="ms-2">Degrees</span><span class="ms-2">rad/s</span><span class="ms-2">Celsius</span></footer>

<script src="https://cdn.jsdelivr.net/npm/bootstrap@5.3.0/dist/js/bootstrap.bundle.min.js"></script>
<script>
  // Outline rows: guide cells (l = line, t = tee, s = space, + / - = expander), status, icon, caption
  const rows = [['+', 'check', 't-mesh', 'Mesh'], ['-', 'bolt-y', 't-static', 'Static Structural (A5)'],
    ['lt', 'check', 't-set', 'Analysis Settings'], ['lt', 'check', 't-pin', 'Pin 1'],
    ['lt', 'check', 't-pin', 'Remote Displacement 2'], ['lt', 'check', 't-pin', 'Pin 2'],
    ['lt', 'check', 't-bolt', 'Bolt Pretension']];
  for (let n = 2; n <= 16; n++) rows.push(['lt', 'check', 't-bolt', 'Bolt Pretension ' + n]);
  rows.push(['le', 'bolt-r', 't-sol', 'Solution (A6)'], ['lst', 'bolt-r', 't-info', 'Solution Information']);
  for (const t of ['Total Deformation', 'Equivalent Stress', 'Equivalent Elastic Strain', 'Equivalent Plastic Strain'])
    rows.push(['lst', 'bolt-r', 't-res', t]);
  rows.push(['lst', 'bolt-r', 't-probe', 'Deformation Probe'], ['lst', 'bolt-r', 't-probe', 'Strain Probe']);
  const cell = { l: '<span class="cell line"></span>', t: '<span class="cell tee"></span>', s: '<span class="cell"></span>',
    '+': '<span class="cell tee"><button class="toggle plus" aria-label="Expand"></button></span>',
    '-': '<span class="cell tee"><button class="toggle" aria-label="Collapse"></button></span>',
    e: '<span class="cell end"><button class="toggle" aria-label="Collapse"></button></span>' };
  document.getElementById('tree').innerHTML = rows.map(([g, s, i, t]) => {
    const cls = (t.includes('(A') ? ' fw-bold' : '') + (t === 'Bolt Pretension' ? ' on' : '');
    return `<li class="node">${[...g].map(c => cell[c]).join('')}<svg width="9" height="16"><use href="#${s}"/></svg><svg width="16" height="16"><use href="#${i}"/></svg><a href="#" class="cap${cls}">${t}</a></li>`;
  }).join('');

  const sol = 'Project>Model>Static Structural>Solution';
  const messages = [
    ['Warning', 'The license manager is delayed in its response. The latest requests were answered after 60', 'D:\\master buckup\\mech\\2019-12-14\\research mode'],
    ['Error', 'An error occurred inside the SOLVER module: general error.', sol],
    ['Error', 'An internal solution magnitude limit was exceeded. Please check your Environment for ina', sol],
    ['Warning', 'One or more objects is using a deformable behavior but is applied to a collinear set of no', sol],
    ['Warning', 'Not enough constraints appear to be applied to prevent rigid body motion.  This may lead', sol],
    ['Warning', 'The license manager is delayed in its response. The latest requests were answered after 7', 'D:\\master buckup\\mech\\2019-12-09\\research mode'],
    ['Warning', 'One or more objects may have lost some scoping attachments during the geometry updat', 'Project']];
  document.getElementById('msgs').innerHTML = messages.map((m, k) =>
    `<tr${k === 1 ? ' class="alt"' : ''}><th><div>${m[0]}</div></th><td><div>${m[1]}</div></td><td${k === 1 ? ' class="bg-white"' : ''}><div>${m[2].replace(/>/g, '&gt;')}</div></td></tr>`).join('');

  // Nut and stub colours for each bolt row, left and right of the column
  const bolts = [[200, '#a06c40', '#5c8c70', '#a0a4a4', null], [242, '#5c8c78', '#a8b0b8', '#86a4b8', '#a87040'],
    [285, '#747888', '#b0b480', '#d0a070', '#d0a880'], [328, '#84845c', '#7c8894', '#90c0ac', '#a8a440']];
  const box = (x, y, w, h, c) => c ? `<rect x="${x}" y="${y}" width="${w}" height="${h}" fill="${c}"/><rect x="${x}" y="${y}" width="${w}" height="${h}" fill="url(#g-cyl)"/>` : '';
  document.getElementById('bolts').innerHTML = bolts.map(([y, a, b, c, d]) =>
    box(1186, y, 8, 21, a) + box(1177, y + 7, 9, 6, b) + box(1310, y, 9, 21, c) + box(1319, y + 7, 8, 6, d)).join('');
</script>
</body>
</html>
